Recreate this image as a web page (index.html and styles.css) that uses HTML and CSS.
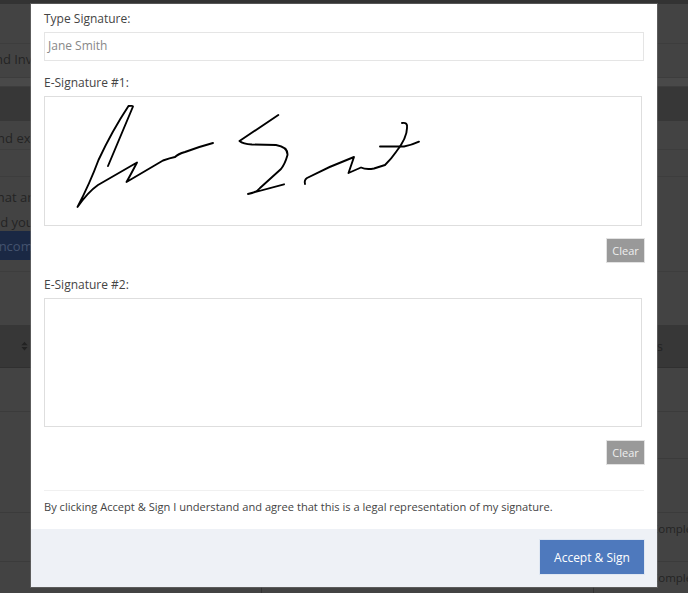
FILE: index.html
```html
<!DOCTYPE html>
<html lang="en">
<head>
<meta charset="utf-8">
<title>E-Signature</title>
<link rel="stylesheet" href="styles.css">
</head>
<body>
<div class="page">
  <div class="topbar"></div>
  <div class="band band-a"></div>
  <div class="band band-b"><span class="clip">Brand Invoices</span></div>
  <div class="band band-c"></div>
  <div class="band band-d"></div>
  <div class="band band-e"><span class="clip clip-wide">Review and expenses</span></div>
  <div class="band band-f"></div>
  <div class="intro">
    <p class="intro-line intro-one"><span class="clip">Items that are</span></p>
    <p class="intro-line intro-two"><span class="clip">and you</span></p>
    <div class="navy"><span class="clip">Incomplete</span></div>
  </div>
  <div class="spacer"></div>
  <div class="thead">
    <svg class="sort" viewBox="0 0 8 10" aria-hidden="true"><path d="M4 0 7.500 4H.5zM4 10 .5 6h7z"/></svg>
    <span class="thead-end">Status</span>
  </div>
  <div class="trow trow-1"><div></div><div></div><div></div></div>
  <div class="trow trow-2"><div></div><div></div><div class="split"><div></div><div></div></div></div>
  <div class="trow trow-3"><div></div><div></div><div class="cell-end">Complete</div></div>
  <div class="trow trow-4"><div></div><div></div><div class="cell-end">Complete</div></div>
</div>

<div class="modal">
  <div class="modal-body">
    <label class="label">Type Signature:</label>
    <div class="input">Jane Smith</div>

    <label class="label label-sig">E-Signature #1:</label>
    <div class="sigbox">
      <svg class="sig" viewBox="45 97 596 128" aria-hidden="true">
        <path d="M108 166 L133 106.500 Q133 105.500 128.500 106 Q112 131 98.500 160 Q90 183 77.500 207 Q88 192 98 185 L137 162.500 Q130 176 126.500 182 L163 160.500 Q170 158 175 157 Q178 154 185 152 Q198 147 213 143"/>
        <path d="M278.300 115 L239.500 141 Q243 144 252 144.500 L276 145 Q288 147 287.500 155 Q285 164 281 169 L260 188 Q256 193 248 194 L284 184.300"/>
        <path d="M305 184 Q304 180 307 178 Q330 166 354 157 L348.500 173 L361 167.500 Q366 170 374 168.500 L385 165 Q392 158 396 152 Q407 138 407 128 Q408 122 402 123"/>
        <path d="M380 146.500 L404 146.500 Q412 145 419 141.700"/>
      </svg>
    </div>
    <div class="clear-row clear-first"><button class="clear" type="button">Clear</button></div>

    <label class="label label-sig label-second">E-Signature #2:</label>
    <div class="sigbox sigbox-second"></div>
    <div class="clear-row"><button class="clear" type="button">Clear</button></div>

    <hr class="rule">
    <p class="legal">By clicking Accept &amp; Sign I understand and agree that this is a legal representation of my signature.</p>
  </div>
  <div class="modal-foot">
    <button class="accept" type="button">Accept &amp; Sign</button>
  </div>
</div>
</body>
</html>
```
FILE: styles.css
```css
* { box-sizing: border-box; }
html, body { margin: 0; height: 100%; overflow: hidden; }
body {
  background: #434343;
  font-family: "Open Sans", "Liberation Sans", sans-serif;
  font-size: 12px;
  color: #444;
}
.page { height: 593px; overflow: hidden; color: #232323; font-size: 13px; }
.topbar { height: 4px; background: #333; }
.band { border-bottom: 1px solid #3d3d3d; display: flex; align-items: center; }
.band-a { height: 40px; background: #434343; }
.band-b { height: 34px; background: #434343; padding-bottom: 3px; }
.band-c { height: 9px; background: #494949; }
.band-d { height: 34px; background: #373737; border-bottom: 0; }
.band-e { height: 29px; padding-top: 5px; }
.band-f { height: 27px; }
.clip { display: block; white-space: nowrap; margin-left: -26px; }
.clip-wide { margin-left: -56px; }
.intro { height: 95px; border-bottom: 1px solid #3d3d3d; overflow: hidden; }
.intro-line { margin: 0; line-height: 18px; }
.intro-one { padding-top: 11px; }
.intro-two { padding-top: 7px; }
.intro-one .clip { margin-left: -45px; }
.intro-two .clip { margin-left: -15px; }
.navy {
  width: 200px;
  height: 29px;
  background: #1a2844;
  color: #44536f;
  display: flex;
  align-items: center;
}
.navy .clip { margin-left: -5px; }
.spacer { height: 53px; }
.thead {
  height: 43px;
  background: #373737;
  border-bottom: 1px solid #303030;
  display: flex;
  align-items: center;
  justify-content: space-between;
  overflow: hidden;
}
.sort { width: 7px; height: 10px; margin-left: 21px; fill: #222; }
.thead-end { margin-right: 25px; white-space: nowrap; }
.trow { display: grid; grid-template-columns: 261px 332px 95px; border-bottom: 1px solid #3b3b3b; }
.trow > div + div { border-left: 1px solid #333; }
.trow-1 { height: 44px; }
.trow-2 { height: 101px; }
.trow-3 { height: 49px; }
.trow-4 { height: 40px; border-bottom: 0; }
.split div:first-child { height: 47px; border-bottom: 1px solid #3b3b3b; }
.cell-end {
  padding-left: 57px;
  padding-top: 7px;
  font-size: 11.500px;
  line-height: 18px;
  white-space: nowrap;
  overflow: hidden;
}

.modal {
  position: absolute;
  left: 31px;
  top: 4px;
  width: 626px;
  height: 583px;
  background: #fff;
  box-shadow: 0 0 0 1px rgba(110, 110, 110, .6);
  display: flex;
  flex-direction: column;
}
.modal-body { flex: 1; padding: 6px 13px 0; }
.label { display: block; line-height: 17px; color: #444; }
.label-sig { margin-top: 13px; }
.input {
  height: 29px;
  margin-top: 5px;
  border: 1px solid #e5e5e5;
  padding-left: 3px;
  line-height: 26px;
  color: #888;
}
.sigbox {
  width: 598px;
  height: 130px;
  margin-top: 5px;
  border: 1px solid #dedede;
  background: #fff;
}
.sigbox-second { height: 129px; }
.sig { display: block; width: 100%; height: 100%; fill: none; stroke: #000; stroke-width: 1.900; stroke-linecap: round; stroke-linejoin: round; }
.clear-row { display: flex; justify-content: flex-end; margin: 13px -1px 0 0; }
.clear-first { margin-top: 12px; }
.clear {
  width: 39px;
  height: 25px;
  padding: 0;
  border: 1px solid #e2e2e2;
  background: #999;
  color: #eee;
  font: 11px "Open Sans", "Liberation Sans", sans-serif;
}
.rule { margin: 25px 0 0; border: 0; border-top: 1px solid #f0f0f0; }
.legal { margin: 8px 0 0; font-size: 11.100px; line-height: 16px; color: #444; white-space: nowrap; }
.modal-foot {
  height: 58px;
  background: #eef1f6;
  display: flex;
  justify-content: flex-end;
  align-items: center;
  padding: 0 12px 2px 0;
}
.accept {
  width: 106px;
  height: 36px;
  padding: 0;
  border: 1px solid #dfe7f2;
  background: #4e79bd;
  color: #fff;
  font: 12px "Open Sans", "Liberation Sans", sans-serif;
}
```
